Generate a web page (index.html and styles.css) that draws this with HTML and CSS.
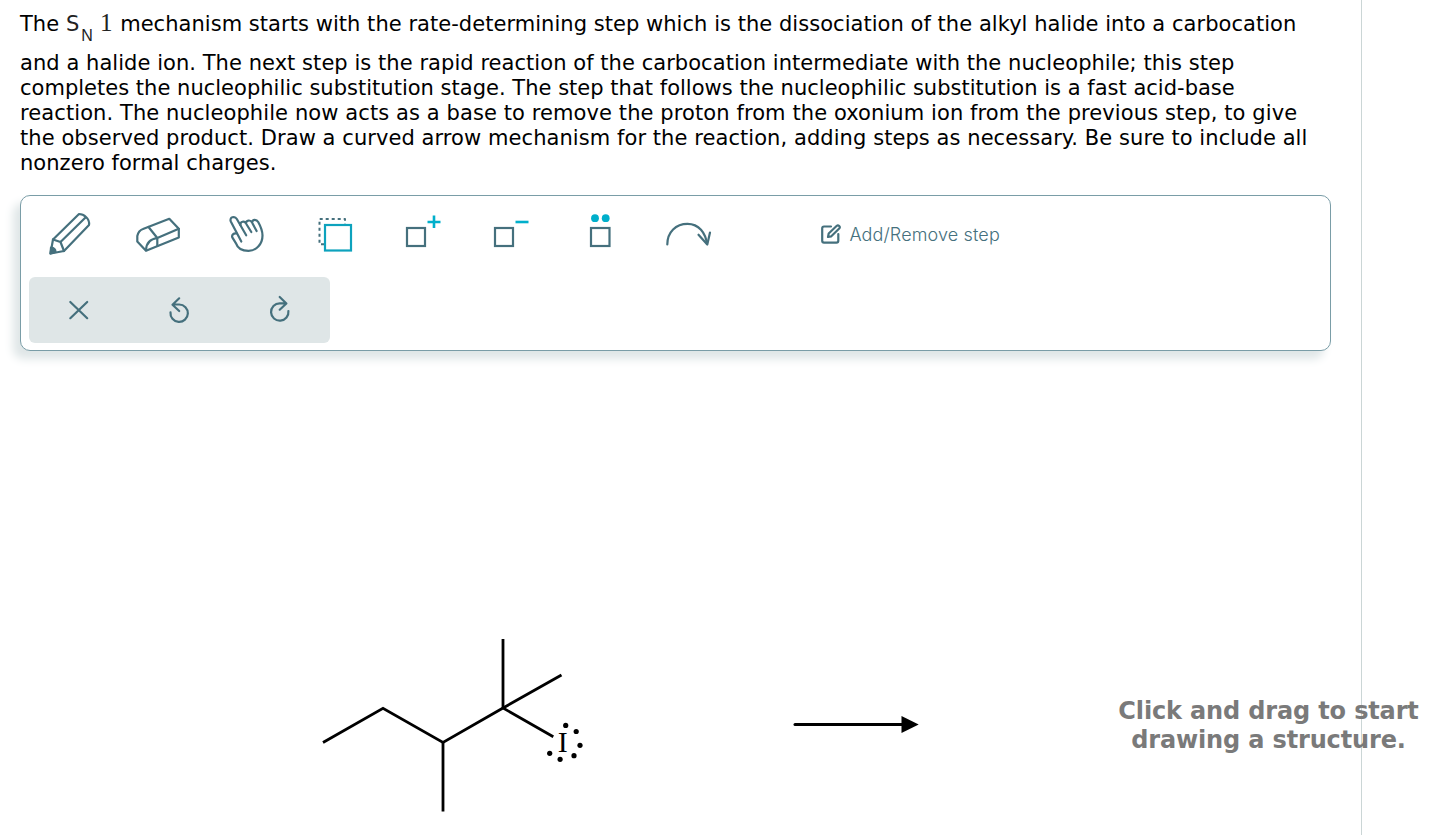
FILE: index.html
```html
<!DOCTYPE html>
<html lang="en">

<head>
    <meta charset="UTF-8">
    <meta name="viewport" content="width=device-width, initial-scale=1.0">
    <title>Mechanism drawing</title>
    <link rel="stylesheet" href="styles.css">
</head>

<body>
    <div class="page">
        <div class="question">
            <span class="line line-1">The <span class="formula"><span class="symbol">S</span><span class="sub">N</span><span class="num">1</span></span> mechanism starts with the rate-determining step which is the dissociation of the alkyl halide into a carbocation</span>
            <span class="line line-2">and a halide ion. The next step is the rapid reaction of the carbocation intermediate with the nucleophile; this step</span>
            <span class="line line-3">completes the nucleophilic substitution stage. The step that follows the nucleophilic substitution is a fast acid-base</span>
            <span class="line line-4">reaction. The nucleophile now acts as a base to remove the proton from the oxonium ion from the previous step, to give</span>
            <span class="line line-5">the observed product. Draw a curved arrow mechanism for the reaction, adding steps as necessary. Be sure to include all</span>
            <span class="line line-6">nonzero formal charges.</span>
        </div>

        <div class="toolbar">
            <div class="tools">
                <div class="tool">
                    <svg viewBox="0 0 48 48">
                        <path d="M33 4Q37 4 40 7Q43.800 10.500 43 15L18 41L4.500 43.500L7 29.500Z" />
                        <path d="M7 29.500L14.500 32L18 41M14.500 32L39.500 7.500" />
                        <path class="fill" d="M5 37.500Q9.500 38 9.500 42L4.500 43.500Z" />
                    </svg>
                </div>
                <div class="tool">
                    <svg viewBox="0 0 48 48">
                        <path d="M35.300 8.800L44.800 18.800V27.500L12 40.800L3.300 31.500V26Q4.500 20.500 9 19Z" />
                        <path d="M14.500 17L23.300 28V36M44.800 18.800L23.300 28Q12.500 29.500 12 40" />
                    </svg>
                </div>
                <div class="tool">
                    <svg viewBox="0 0 48 48">
                        <path d="M18.300 31.500L7.800 11.500C6 7.300 11.700 5.400 13.800 9L23.200 25.300" />
                        <path d="M17.500 15C17 11.300 21.500 10.500 23 13.500L28.300 22M23 13.500C22.800 10 27.500 9.500 29 12.500L33.600 21M29 12.500C29.500 9 33.500 9 35.200 12C38 17 39.500 20.500 39.500 25.500C39.500 34 33.500 40.800 25.500 40.800C18.500 40.800 14.500 37.800 13 33.300L9.300 27.300C8.500 25 10.500 23 13.500 23.500" />
                    </svg>
                </div>
                <div class="tool">
                    <svg viewBox="0 0 48 48">
                        <path class="dotted" d="M13 34.300H8.500V9H34V15" />
                        <rect class="cyan-dark" x="14" y="15" width="26" height="25.500" />
                    </svg>
                </div>
                <div class="tool">
                    <svg viewBox="0 0 48 48">
                        <rect x="8" y="18" width="18" height="18" />
                        <path class="cyan" d="M28.500 12H41.500M35 5.500V18" />
                    </svg>
                </div>
                <div class="tool">
                    <svg viewBox="0 0 48 48">
                        <rect x="7" y="18" width="18" height="18" />
                        <path class="cyan" d="M27.500 12H40.500" />
                    </svg>
                </div>
                <div class="tool">
                    <svg viewBox="0 0 48 48">
                        <rect x="15" y="18" width="18.500" height="18" />
                        <circle class="cyan-dot" cx="19" cy="8.200" r="3.900" />
                        <circle class="cyan-dot" cx="29.700" cy="8.200" r="3.900" />
                    </svg>
                </div>
                <div class="tool">
                    <svg viewBox="0 0 48 48">
                        <path d="M3.300 34.500C3.300 22 12 13.800 23.500 13.800C35 13.800 41.500 23 43 34" />
                        <path d="M34.500 24.700L43.300 34.500L46 22.500" />
                    </svg>
                </div>
                <div class="step">
                    <svg viewBox="0 0 20 20">
                        <path d="M10 2.500H3Q1.200 2.500 1.200 4.300V16.800Q1.200 18.600 3 18.600H15.500Q17.300 18.600 17.300 16.800V10" />
                        <path d="M7 13L7.700 9.500L15.800 1.800Q17 .8 18.200 2T18.200 4.500L10.300 12.300Z" />
                    </svg>
                    <span class="step-label">Add/Remove step</span>
                </div>
            </div>
            <div class="history">
                <div class="history-btn">
                    <svg viewBox="0 0 28 32">
                        <path d="M5.300 8L22.200 24.200M22.200 8L5.300 24.200" />
                    </svg>
                </div>
                <div class="history-btn">
                    <svg viewBox="0 0 28 32">
                        <path d="M5.500 18.300A8.700 8.700 0 1 0 14.200 10.500H7.700M14.200 4.300L7.500 10.700L14.200 17" />
                    </svg>
                </div>
                <div class="history-btn">
                    <svg viewBox="0 0 28 32">
                        <path d="M22.400 17A8.700 8.700 0 1 1 13.700 9.300H20.200M13.700 3L20.400 9.500L13.700 15.700" />
                    </svg>
                </div>
            </div>
        </div>

        <div class="canvas">
            <!-- starting structure and reaction arrow -->
            <svg class="drawing" viewBox="0 351 1361 484">
                <path class="bond" d="M323 742.500L383 708.300L443 742.500L503 708L561.500 675" />
                <path class="bond" d="M443 742.500V811.500M503 639V708L553.300 736.700" />
                <text class="atom" x="562.700" y="752">I</text>
                <circle cx="565.700" cy="725.400" r="2.600" />
                <circle cx="576.200" cy="731.500" r="2.600" />
                <circle cx="580" cy="745.300" r="2.600" />
                <circle cx="574" cy="755.700" r="2.600" />
                <circle cx="560.100" cy="759.300" r="2.600" />
                <circle cx="549.700" cy="753.300" r="2.600" />
                <path class="bond arrow" d="M795 724.500H904" />
                <path d="M901.500 716L918.700 724.500L901.500 733Z" />
            </svg>
            <p class="hint">Click and drag to start<br>drawing a structure.</p>
        </div>
    </div>
</body>

</html>
```

FILE: styles.css
```css
:root {
    --teal: #45707d;
    --border: #7a9da7;
    --cyan: #00afcb;
    --gray: #dfe6e7;
}

* {
    padding: 0;
    margin: 0;
    box-sizing: border-box;
}

body {
    height: 836px;
    overflow: hidden;
    background-color: #fff;
    font-family: "DejaVu Sans", Verdana, sans-serif;
}

.page {
    display: flex;
    flex-direction: column;
    width: 1362px;
    height: 835px;
    padding-left: 20px;
    border-right: 1px solid #cbd6d6;
}

/* question text */
.question {
    height: 195px;
    padding-top: 10px;
    font-size: 21px;
    line-height: 25px;
    letter-spacing: 0.05px;
    color: #000;
}

.question .line {
    display: block;
    height: 25px;
    white-space: nowrap;
}

.question .line-1 {
    height: 41px;
    letter-spacing: 0.04px;
}

.question .line-3 {
    letter-spacing: 0.015px;
}

.question .line-4 {
    letter-spacing: 0.093px;
}

.question .line-5 {
    letter-spacing: 0.067px;
}

.formula {
    margin-right: 1px;
    color: #222;
}

.formula .sub {
    position: relative;
    top: 10px;
    margin-left: 2px;
    font: 16px/1 "Liberation Sans", sans-serif;
}

.formula .num {
    margin-left: 7px;
    font: 25px/1 "Liberation Serif", serif;
}

/* toolbar */
.toolbar {
    width: 1311px;
    height: 156px;
    padding: 5px 8px 7px;
    border: 1px solid var(--border);
    border-radius: 10px;
    background-color: #fff;
    box-shadow: -7px 8px 10px 0 var(--gray);
}

.toolbar svg {
    fill: none;
    stroke: var(--teal);
    stroke-width: 2.2;
    stroke-linecap: round;
    stroke-linejoin: round;
}

.tools {
    display: flex;
    align-items: center;
    height: 66px;
    margin: 0 0 10px -3px;
}

.tool {
    display: flex;
    justify-content: center;
    width: 88.3px;
}

.tool svg {
    width: 48px;
    height: 48px;
}

.toolbar .tool rect {
    stroke-linejoin: miter;
}

.toolbar .fill {
    fill: var(--teal);
}

.toolbar .dotted {
    stroke-dasharray: 3 3;
    stroke-linecap: butt;
    stroke-width: 2;
}

.toolbar .cyan-dark {
    stroke: #0da2bd;
}

.toolbar .cyan {
    stroke: var(--cyan);
    stroke-width: 2.6;
    stroke-linecap: butt;
}

.toolbar .cyan-dot {
    fill: var(--cyan);
    stroke: none;
}

.step {
    display: flex;
    align-items: center;
    gap: 9px;
    margin-left: 89px;
    font: 300 18px/24px Inter, sans-serif;
    letter-spacing: 0.13px;
    color: var(--teal);
}

.step-label {
    padding-top: 2px;
    margin-left: -1px;
}

.step svg {
    width: 20px;
    height: 20px;
}

.history {
    display: flex;
    width: 301px;
    height: 66px;
    border-radius: 6px;
    background-color: var(--gray);
}

.history-btn {
    display: flex;
    flex: 1;
    justify-content: center;
    align-items: center;
}

.history-btn svg {
    width: 28px;
    height: 32px;
}

/* drawing area */
.canvas {
    position: relative;
    flex: 1;
    margin-left: -20px;
}

.drawing {
    display: block;
    width: 1361px;
    height: 484px;
}

.bond {
    fill: none;
    stroke: #000;
    stroke-width: 2.8;
}

.arrow {
    stroke-width: 3;
    stroke-linecap: round;
}

.atom {
    font: 30px "Liberation Serif", serif;
    text-anchor: middle;
}

.hint {
    position: absolute;
    top: 346px;
    left: 1108px;
    width: 321px;
    font-size: 24px;
    font-weight: bold;
    line-height: 29px;
    letter-spacing: -0.15px;
    text-align: center;
    white-space: nowrap;
    color: #7a7a7a;
}
```
